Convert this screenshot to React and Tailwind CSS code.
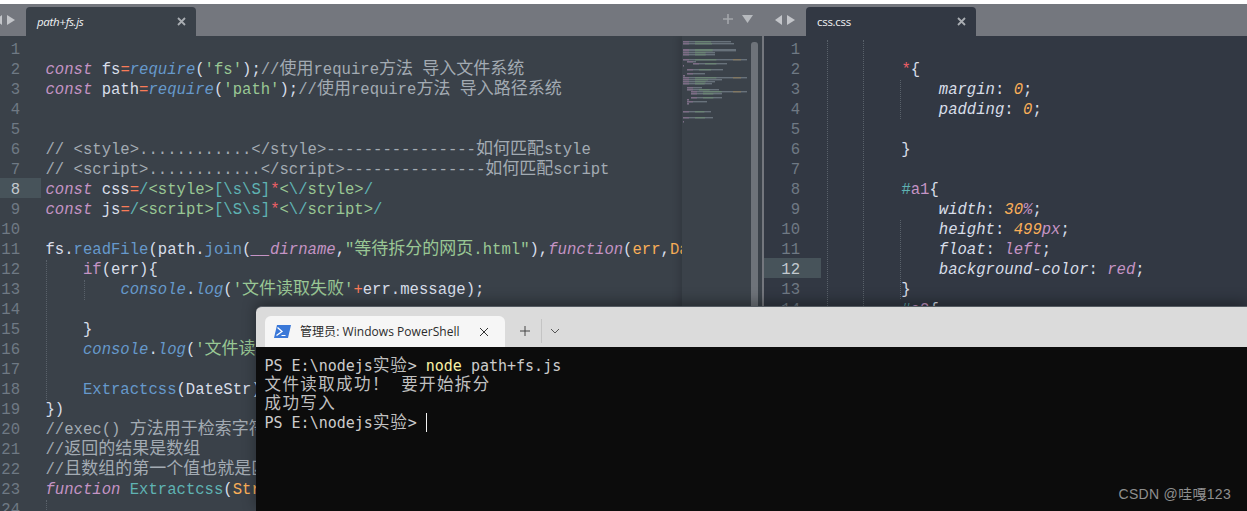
import React from "react";

const kw = "text-[#c594c5] italic";
const fn = "text-[#6699cc] italic";
const me = "text-[#6699cc]";
const op = "text-[#f97b58]";
const tx = "text-[#d8dee9]";
const st = "text-[#99c794]";
const cm = "text-[#a3abb3]";
const te = "text-[#5fb3b3]";
const ar = "text-[#f9ae58]";
const re = "text-[#ec5f67]";
const pp = "text-[#c594c5]";
const it = "text-[#d8dee9] italic";
const oi = "text-[#f9ae58] italic";
const pi = "text-[#c594c5] italic";

const leftLines = [
  [],
  [[kw, "const"], [tx, " fs"], [op, "="], [fn, "require"], [tx, "("], [st, "'fs'"], [tx, ");"], [cm, "//使用require方法 导入文件系统"]],
  [[kw, "const"], [tx, " path"], [op, "="], [fn, "require"], [tx, "("], [st, "'path'"], [tx, ");"], [cm, "//使用require方法 导入路径系统"]],
  [],
  [],
  [[cm, "// <style>............</style>----------------如何匹配style"]],
  [[cm, "// <script>............</script>---------------如何匹配script"]],
  [[kw, "const"], [tx, " css"], [op, "="], [te, "/"], [st, "<style>"], [te, "[\\s\\S]"], [re, "*"], [st, "<"], [te, "\\/"], [st, "style>"], [te, "/"]],
  [[kw, "const"], [tx, " js"], [op, "="], [te, "/"], [st, "<script>"], [te, "[\\S\\s]"], [re, "*"], [st, "<"], [te, "\\/"], [st, "script>"], [te, "/"]],
  [],
  [[tx, "fs."], [me, "readFile"], [tx, "(path."], [me, "join"], [tx, "("], [pi, "__dirname"], [tx, ","], [st, "\"等待拆分的网页.html\""], [tx, "),"], [kw, "function"], [tx, "("], [ar, "err"], [tx, ","], [ar, "DateStr"], [tx, "){"]],
  [[tx, "    "], [pp, "if"], [tx, "(err){"]],
  [[tx, "        "], [fn, "console"], [tx, "."], [fn, "log"], [tx, "("], [st, "'文件读取失败'"], [op, "+"], [tx, "err.message);"]],
  [],
  [[tx, "    }"]],
  [[tx, "    "], [fn, "console"], [tx, "."], [fn, "log"], [tx, "("], [st, "'文件读取成功！ 要开始拆分'"], [tx, ");"]],
  [],
  [[tx, "    "], [me, "Extractcss"], [tx, "(DateStr);"]],
  [[tx, "})"]],
  [[cm, "//exec() 方法用于检索字符串中的正则表达式的匹配"]],
  [[cm, "//返回的结果是数组"]],
  [[cm, "//且数组的第一个值也就是匹配的文本"]],
  [[kw, "function"], [tx, " "], [te, "Extractcss"], [tx, "("], [ar, "Str"], [tx, "){"]],
  [],
];

const rightLines = [
  [],
  [[tx, "        "], [re, "*"], [tx, "{"]],
  [[tx, "            "], [it, "margin"], [tx, ": "], [oi, "0"], [tx, ";"]],
  [[tx, "            "], [it, "padding"], [tx, ": "], [oi, "0"], [tx, ";"]],
  [],
  [[tx, "        }"]],
  [],
  [[tx, "        "], [te, "#"], [pp, "a1"], [tx, "{"]],
  [[tx, "            "], [it, "width"], [tx, ": "], [oi, "30"], [pi, "%"], [tx, ";"]],
  [[tx, "            "], [it, "height"], [tx, ": "], [oi, "499"], [pi, "px"], [tx, ";"]],
  [[tx, "            "], [it, "float"], [tx, ": "], [pi, "left"], [tx, ";"]],
  [[tx, "            "], [it, "background-color"], [tx, ": "], [pi, "red"], [tx, ";"]],
  [[tx, "        }"]],
  [[tx, "        "], [te, "#"], [pp, "a2"], [tx, "{"]],
];

// y, x0, x1 relative to the minimap
const miniRows = [
  [3, 1, 49], [5, 1, 52], [11, 1, 54], [12, 1, 54], [14, 1, 33], [16, 1, 33], [21, 1, 65], [23, 5, 14],
  [25, 11, 45], [27, 1, 2], [31, 5, 41], [35, 5, 23], [37, 1, 3], [39, 1, 65], [41, 1, 40], [43, 1, 33],
  [45, 1, 30], [49, 5, 20], [51, 5, 37], [53, 9, 65], [55, 9, 40], [59, 9, 40], [61, 5, 7], [63, 5, 25],
  [65, 5, 7], [73, 1, 29], [79, 1, 31], [83, 1, 2],
];

function Text({ c, t }) {
  const parts = t.split(/([\u4e00-\u9fff！]+)/);
  return (
    <span className={c}>
      {parts.map((p, i) =>
        i % 2 ? (
          <span key={i} className="text-[17px] not-italic">
            {p}
          </span>
        ) : (
          p
        )
      )}
    </span>
  );
}

function CodeLine({ tokens }) {
  return (
    <div className="h-5 leading-5 whitespace-pre">
      {tokens.map((tk, i) => (
        <Text key={i} c={tk[0]} t={tk[1]} />
      ))}
    </div>
  );
}

function Tab({ name, active, italic }) {
  return (
    <div className={`flex h-[29px] w-[170px] shrink-0 items-center justify-between rounded-t-[4px] pl-[11px] pr-[10px] text-[11.5px] text-[#f0f2f4] ${active}`}>
      <span className={`font-['Open_Sans',sans-serif] tracking-[-0.3px] ${italic ? "italic" : ""}`}>{name}</span>
      <svg width="9" height="9" viewBox="0 0 9 9" className="text-[#a9adb2]">
        <path d="M1 1l7 7M8 1l-7 7" stroke="currentColor" strokeWidth="1.8" />
      </svg>
    </div>
  );
}

function Arrows({ className }) {
  return (
    <svg width="22" height="12" viewBox="0 0 22 12" className={className}>
      <path d="M8 1v10L1 6z" fill="#c3c5c9" />
      <path d="M13 1v10l8-5z" fill="#c3c5c9" />
    </svg>
  );
}

function Numbers({ count, active, className }) {
  return (
    <div className={`shrink-0 text-right ${className}`}>
      {Array.from({ length: count }, (_, i) => (
        <div key={i} className={i + 1 === active ? "text-[#c3c9cf]" : ""}>
          {i + 1}
        </div>
      ))}
    </div>
  );
}

function Minimap() {
  return (
    <div className="absolute top-0 left-[682px] h-full w-[80px] bg-[#3b424a] shadow-[-4px_0_6px_rgba(0,0,0,0.12)]">
      <svg width="70" height="130" viewBox="0 0 70 130" className="mt-[2px] opacity-70">
        {miniRows.map(([y, a, b], i) => (
          <g key={i}>
            <rect x={a} y={y} width={b - a} height="1.4" fill="#7b8791" />
            <rect x={a} y={y} width={Math.min(6, b - a)} height="1.4" fill="#9a7f9f" />
            {b - a > 20 && <rect x={a + 12} y={y} width={(b - a) / 3} height="1.4" fill="#7f9f86" />}
            {b > 60 && <rect x={b - 14} y={y} width="8" height="1.4" fill="#a08e6c" />}
          </g>
        ))}
      </svg>
      <div className="absolute top-[6px] right-[4px] bottom-0 w-[7px] rounded-t-[3px] bg-[#6e737a]" />
    </div>
  );
}

function IndentGuides({ items }) {
  return items.map(([left, top, height], i) => (
    <div
      key={i}
      className="absolute w-0 border-l border-dotted border-[#59616a]"
      style={{ left, top, height }}
    />
  ));
}

function PsIcon() {
  return (
    <svg width="17" height="13" viewBox="0 0 17 13">
      <path d="M3 0h14l-3 13H0z" fill="#3a78d8" />
      <path d="M3.500 2.500l4.500 4-5.500 4" fill="none" stroke="#fff" strokeWidth="1.3" />
      <path d="M7.500 10.500h4" stroke="#fff" strokeWidth="1.2" />
    </svg>
  );
}

function Terminal() {
  return (
    <div className="absolute top-[306px] left-[256px] right-0 bottom-0 flex flex-col overflow-hidden rounded-tl-[6px] border-t border-[#555b62] bg-[#dbdbdb] shadow-[0_-4px_14px_rgba(0,0,0,0.35)]">
      <div className="flex h-10 shrink-0 items-end pl-[9px] text-[#2b2b2b]">
        <div className="flex h-[31px] w-[240px] items-center rounded-t-[6px] bg-[#f6f6f6] pl-[9px]">
          <PsIcon />
          <span className="ml-[9px] w-[180px] font-['Open_Sans','Noto_Sans_CJK_SC',sans-serif] text-[12px] tracking-[0.05px]">管理员: Windows PowerShell</span>
          <svg width="10" height="10" viewBox="0 0 10 10" className="ml-[-1px]">
            <path d="M1 1l8 8M9 1l-8 8" stroke="#333" strokeWidth="1" />
          </svg>
        </div>
        <div className="mb-[4px] flex h-6 items-center">
          <svg width="12" height="12" viewBox="0 0 12 12" className="ml-[14px]">
            <path d="M6 1v10M1 6h10" stroke="#444" strokeWidth="1" />
          </svg>
          <div className="ml-[10px] h-6 w-px bg-[#c4c4c4]" />
          <svg width="10" height="6" viewBox="0 0 10 6" className="ml-[8px]">
            <path d="M1 1l4 4 4-4" fill="none" stroke="#555" strokeWidth="1" />
          </svg>
        </div>
      </div>
      <div className="relative flex-1 bg-[#0c0c0c] pt-[9px] pl-[8.5px] font-['DejaVu_Sans_Mono','Noto_Sans_CJK_SC',monospace] text-[15px] leading-[19px] whitespace-pre text-[#cccccc]">
        <div className="h-[19px]">
          PS E:\nodejs<span className="text-[16.5px] leading-[19px] tracking-[0.9px] text-[#c0c0c0]">实验</span>&gt; <span className="text-[#f9f1a5]">node</span> path+fs.js
        </div>
        <div className="h-[19px] text-[16.5px] tracking-[1.4px] text-[#c0c0c0]">文件读取成功！ 要开始拆分</div>
        <div className="h-[19px] text-[16.5px] tracking-[1.4px] text-[#c0c0c0]">成功写入</div>
        <div className="flex h-[19px] items-center">
          <span>
            PS E:\nodejs<span className="text-[16.5px] leading-[19px] tracking-[0.9px] text-[#c0c0c0]">实验</span>&gt;{" "}
          </span>
          <span className="h-[19px] w-px bg-[#f2f2f2]" />
        </div>
        <div className="absolute right-4 bottom-[9px] font-['Liberation_Sans','Noto_Sans_CJK_SC',sans-serif] text-[14px] leading-4 tracking-[0.3px] text-[#8f8f8f]">CSDN @哇嘎123</div>
      </div>
    </div>
  );
}

export default function App() {
  return (
    <div className="relative flex h-[511px] w-[1247px] flex-col overflow-hidden bg-white font-['Liberation_Mono','Noto_Sans_CJK_SC',monospace] text-[15.6px]">
      <div className="mt-1 flex h-8 shrink-0 items-end bg-[#74777e]">
        <div className="flex h-full w-[764px] shrink-0 items-end pl-[26px]">
          <Arrows className="absolute top-[14px] left-[-6px]" />
          <Tab name="path+fs.js" italic active="bg-[#3a4149]" />
          <svg width="32" height="12" viewBox="0 0 32 12" className="mb-[11px] ml-[526px] shrink-0">
            <path d="M6 1v10M1 6h10" stroke="#a3a6ab" strokeWidth="1.6" />
            <path d="M20 2h11l-5.500 8z" fill="#b7babe" />
          </svg>
        </div>
        <div className="flex h-full flex-1 items-end pl-[42px]">
          <Arrows className="absolute top-[14px] left-[774px]" />
          <Tab name="css.css" active="bg-[#323843]" />
        </div>
      </div>
      <div className="flex min-h-0 flex-1">
        <div className="relative w-[762px] shrink-0 overflow-hidden bg-[#3a4149] pt-[4px]">
          <div className="absolute top-[142px] left-0 h-5 w-[41px] bg-[#47535a]" />
          <div className="relative flex">
            <Numbers count={24} active={8} className="w-[20px] leading-5 text-[#6f7984]" />
            <div className="ml-[25.500px] w-[636px] overflow-hidden">
              {leftLines.map((tokens, i) => (
                <CodeLine key={i} tokens={tokens} />
              ))}
            </div>
          </div>
          <IndentGuides items={[[46, 224, 140], [46, 464, 30], [84, 244, 20]]} />
          <Minimap />
        </div>
        <div className="w-[2px] shrink-0 bg-[#74777e]" />
        <div className="relative min-w-0 flex-1 overflow-hidden bg-[#323843] pt-[4px]">
          <div className="absolute top-[222px] left-0 h-5 w-[57px] bg-[#47535a]" />
          <div className="relative flex">
            <Numbers count={14} active={12} className="w-[36px] leading-5 text-[#6f7984]" />
            <div className="ml-[26.500px]">
              {rightLines.map((tokens, i) => (
                <CodeLine key={i} tokens={tokens} />
              ))}
            </div>
          </div>
          <IndentGuides items={[[63, 4, 290], [99, 4, 290], [136, 44, 39], [136, 184, 79]]} />
        </div>
      </div>
      <Terminal />
    </div>
  );
}
